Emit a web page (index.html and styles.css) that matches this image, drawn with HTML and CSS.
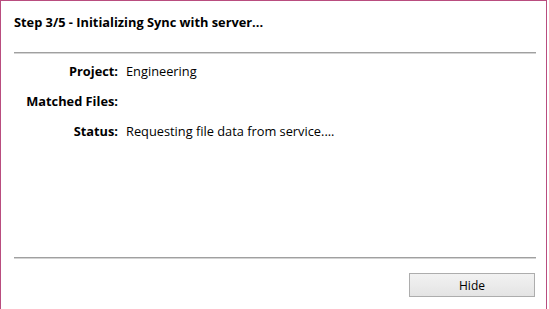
FILE: index.html
```html
<!DOCTYPE html>
<html>
<head>
<meta charset="utf-8">
<link rel="stylesheet" href="styles.css">
</head>
<body>
<div class="window">
  <div class="title">Step 3/5 - Initializing Sync with server...</div>
  <div class="sep"></div>
  <div class="form">
    <div class="label">Project:</div><div class="value">Engineering</div>
    <div class="label">Matched Files:</div><div class="value"></div>
    <div class="label">Status:</div><div class="value">Requesting file data from service....</div>
  </div>
  <div class="sep"></div>
  <div class="footer">
    <button class="btn">Hide</button>
  </div>
</div>
</body>
</html>
```
FILE: styles.css
```css
html, body {
  margin: 0;
  padding: 0;
  background: #ffffff;
}
body {
  font-family: "Open Sans", "Noto Sans", sans-serif;
  font-size: 12.8px;
  color: #000;
}
.window {
  box-sizing: border-box;
  width: 547px;
  height: 309px;
  border: 1px solid #b94d7f;
  border-bottom: none;
  display: flex;
  flex-direction: column;
}
.title {
  font-weight: bold;
  padding: 13px 0 0 13px;
  height: 51px;
  box-sizing: border-box;
  line-height: 17px;
}
.sep {
  height: 1px;
  margin: 0 10px 0 13px;
  background: #d4d4d4;
  border-top: 1px solid #a0a0a0;
}
.form {
  flex: 1;
  display: grid;
  grid-template-columns: 104px 1fr;
  column-gap: 8px;
  row-gap: 13px;
  padding: 9px 0 0 13px;
  align-content: start;
  line-height: 17px;
}
.label {
  font-weight: bold;
  text-align: right;
}
.value {
  min-height: 17px;
}
.footer {
  height: 50px;
  display: flex;
  justify-content: flex-end;
  align-items: flex-start;
  padding: 14px 11px 0 0;
  box-sizing: border-box;
}
.btn {
  width: 126px;
  height: 24px;
  font-family: inherit;
  font-size: 12px;
  color: #000;
  background: linear-gradient(#f2f2f2, #e4e4e4);
  border: 1px solid #adadad;
  padding: 0;
}
```
